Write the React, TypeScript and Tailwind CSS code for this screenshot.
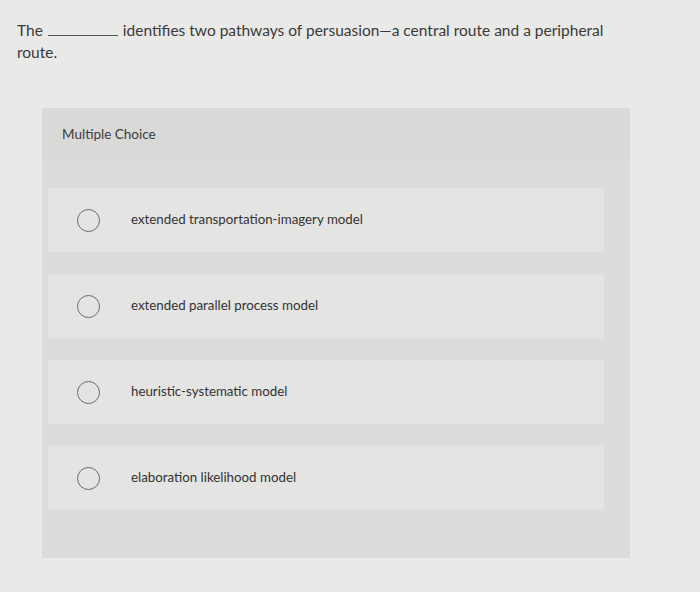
const options = [
  "extended transportation-imagery model",
  "extended parallel process model",
  "heuristic-systematic model",
  "elaboration likelihood model",
];

export default function App() {
  return (
    <div
      className="w-[700px] h-[592px] bg-[#e9e9e7] pt-[19px] pl-[17px] overflow-hidden"
      style={{ fontFamily: "Lato, 'Open Sans', sans-serif" }}
    >
      {/* question */}
      <p className="w-[620px] text-[15.5px] leading-[22px] text-[#3a3a3a]">
        The
        <span className="inline-block w-[70px] h-[14px] mx-[5px] border-b border-[#555] align-baseline" />
        identifies two pathways of persuasion—a central route and a peripheral route.
      </p>

      {/* answer panel */}
      <div className="mt-[45px] ml-[25px] w-[588px] h-[450px] bg-[#dcdcdb]">
        <div className="h-[52px] bg-[#d9d9d8] pl-[20px] flex items-center">
          <span className="text-[13.5px] text-[#3c3c3c]">Multiple Choice</span>
        </div>
        <div className="pt-[28px] flex flex-col gap-[22px]">
          {options.map((o) => (
            <div
              key={o}
              className="ml-[6px] w-[556px] h-[64px] bg-[#e4e4e3] flex items-center pl-[29px]"
            >
              <span className="w-[23px] h-[23px] rounded-full border-[1.5px] border-[#6a6a6a] shrink-0" />
              <span className="ml-[31px] text-[13.3px] text-[#333]">{o}</span>
            </div>
          ))}
        </div>
      </div>
    </div>
  );
}
